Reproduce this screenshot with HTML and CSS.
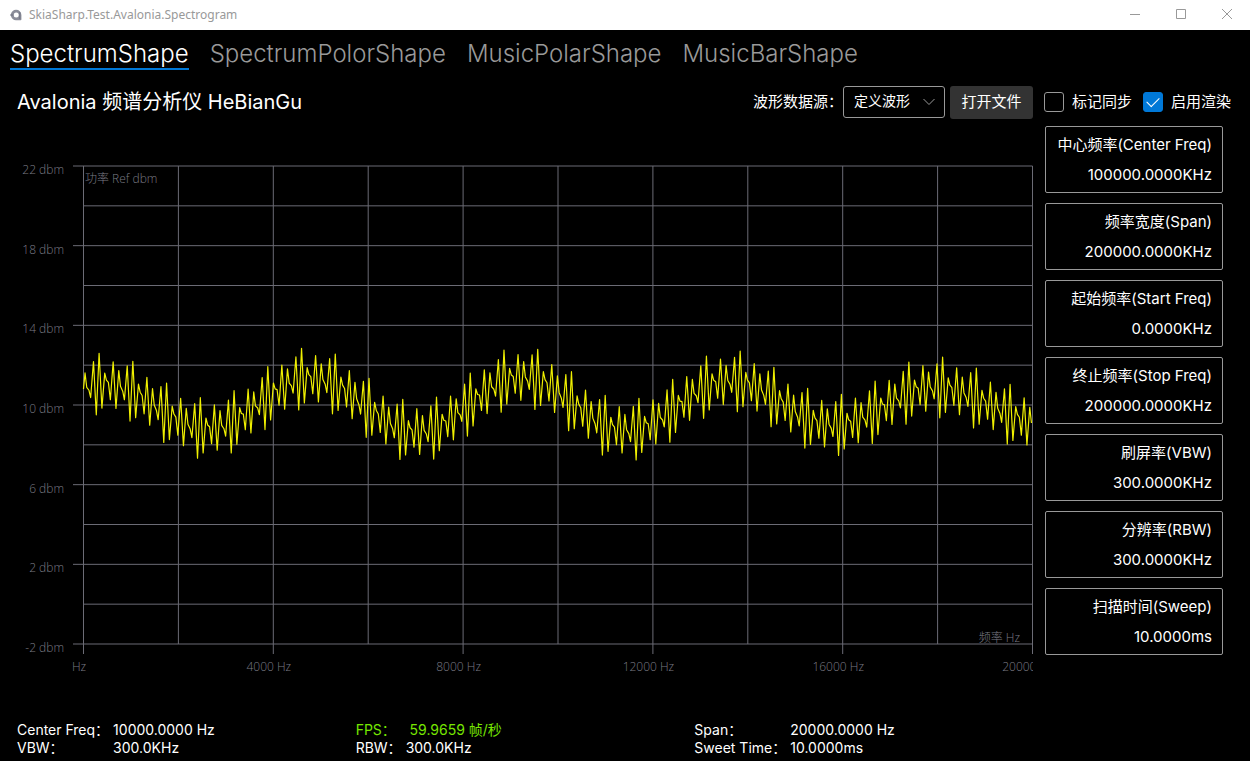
FILE: index.html
```
<!DOCTYPE html>
<html lang="zh-CN">
  <head>
    <meta charset="UTF-8" />
    <meta name="viewport" content="width=device-width, initial-scale=1.0" />
    <title>SkiaSharp.Test.Avalonia.Spectrogram</title>
    <link rel="stylesheet" href="styles.css">
  </head>
  <body>
    <header class="titlebar">
      <svg class="app-icon" viewBox="0 0 12 12" aria-hidden="true">
        <path d="M6 .8C3.400.8 1.600 2.500 1 4.800L0 6l1 1.200C1.600 9.500 3.400 11.200 6 11.200h4.600c.5 0 .8-.3.8-.8V6A5.300 5.200 0 0 0 6 .8z" fill="#8b8d99" />
        <circle cx="6.200" cy="6" r="2.500" fill="#fff" />
        <path d="M1 6h2.500M9.800 3v7" stroke="#6f7282" fill="none" />
      </svg>
      <span class="app-title">SkiaSharp.Test.Avalonia.Spectrogram</span>
      <div class="window-buttons">
        <button type="button" aria-label="Minimize">
          <svg viewBox="0 0 12 12"><path d="M1 5.5h10" /></svg>
        </button>
        <button type="button" aria-label="Maximize">
          <svg viewBox="0 0 12 12"><path d="M1.5 0.5h9v9h-9z" /></svg>
        </button>
        <button type="button" aria-label="Close">
          <svg viewBox="0 0 12 12"><path d="M1 0l10 10M11 0L1 10" /></svg>
        </button>
      </div>
    </header>

    <nav class="tabs">
      <a class="active" href="#spectrum">SpectrumShape</a>
      <a href="#spectrum-polar">SpectrumPolorShape</a>
      <a href="#music-polar">MusicPolarShape</a>
      <a href="#music-bar">MusicBarShape</a>
    </nav>

    <div class="toolbar">
      <h1>Avalonia 频谱分析仪 HeBianGu</h1>
      <label class="source-label" for="source">波形数据源：</label>
      <div class="select-box">
        <select id="source">
          <option>定义波形</option>
        </select>
        <svg class="chevron" viewBox="0 0 12 8" aria-hidden="true"><path d="M0.5 1l5.5 5.5L11.5 1" /></svg>
      </div>
      <button class="open-file" type="button">打开文件</button>
      <label class="check"><input type="checkbox" /><span>标记同步</span></label>
      <label class="check"><input type="checkbox" checked /><span>启用渲染</span></label>
    </div>

    <main class="content">
      <section class="chart">
        <div class="y-axis">
          <span>22 dbm</span>
          <span>18 dbm</span>
          <span>14 dbm</span>
          <span>10 dbm</span>
          <span>6 dbm</span>
          <span>2 dbm</span>
          <span>-2 dbm</span>
        </div>
        <div class="plot">
          <svg class="plot-svg" viewBox="0 0 960 488" preserveAspectRatio="none">
            <path id="grid" class="grid-lines" />
            <path id="wave" class="wave" />
          </svg>
          <span class="y-name">功率 Ref dbm</span>
          <span class="x-name">频率 Hz</span>
        </div>
        <div class="x-axis">
          <span>Hz</span>
          <span>4000 Hz</span>
          <span>8000 Hz</span>
          <span>12000 Hz</span>
          <span>16000 Hz</span>
          <span>20000 Hz</span>
        </div>
      </section>

      <aside class="cards">
        <div class="card"><span>中心频率(Center Freq)</span><span>100000.0000KHz</span></div>
        <div class="card"><span>频率宽度(Span)</span><span>200000.0000KHz</span></div>
        <div class="card"><span>起始频率(Start Freq)</span><span>0.0000KHz</span></div>
        <div class="card"><span>终止频率(Stop Freq)</span><span>200000.0000KHz</span></div>
        <div class="card"><span>刷屏率(VBW)</span><span>300.0000KHz</span></div>
        <div class="card"><span>分辨率(RBW)</span><span>300.0000KHz</span></div>
        <div class="card"><span>扫描时间(Sweep)</span><span>10.0000ms</span></div>
      </aside>
    </main>

    <footer class="status">
      <div class="status-group">
        <span>Center Freq：</span><span>10000.0000 Hz</span>
        <span>VBW：</span><span>300.0KHz</span>
      </div>
      <div class="status-group">
        <span class="fps">FPS：</span><span class="fps">&nbsp;59.9659 帧/秒</span>
        <span>RBW：</span><span>300.0KHz</span>
      </div>
      <div class="status-group">
        <span>Span：</span><span>20000.0000 Hz</span>
        <span>Sweet Time：</span><span>10.0000ms</span>
      </div>
    </footer>

    <script src="script.js"></script>
  </body>
</html>
```
FILE: styles.css
```
* {
  box-sizing: border-box;
}

body {
  margin: 0;
  min-height: 100vh;
  display: flex;
  flex-direction: column;
  background-color: #000;
  color: #fff;
  font-family: Inter, "Noto Sans CJK SC", sans-serif;
  font-size: 15px;
}

button,
select {
  font-family: inherit;
  color: inherit;
}

/* Title bar */

.titlebar {
  display: flex;
  align-items: center;
  height: 30px;
  padding-left: 10px;
  background-color: #fff;
  color: #999;
}

.app-icon {
  width: 12px;
  height: 12px;
  margin-right: 7px;
}

.app-title {
  padding-bottom: 2px;
  font-family: "Noto Sans", sans-serif;
  font-size: 12px;
}

.window-buttons {
  display: flex;
  margin-left: auto;
}

.window-buttons button {
  display: flex;
  justify-content: center;
  align-items: center;
  width: 46px;
  height: 30px;
  padding: 0;
  border: none;
  background: none;
}

.window-buttons svg {
  width: 12px;
  height: 12px;
  fill: none;
  stroke: #999;
}

/* Tabs */

.tabs {
  display: flex;
  gap: 21px;
  padding: 9px 10px 0;
}

.tabs a {
  height: 31px;
  border-bottom: 2px solid transparent;
  color: #999;
  font-size: 24px;
  font-weight: 300;
  line-height: 30px;
  text-decoration: none;
}

.tabs .active {
  border-color: #0078d7;
  color: #fff;
}

/* Toolbar */

.toolbar {
  display: flex;
  align-items: center;
  height: 32px;
  margin-top: 16px;
  padding: 0 19px 0 17px;
}

.toolbar h1 {
  margin: 0 auto 0 0;
  padding-bottom: 3px;
  font-size: 20px;
  font-weight: 400;
}

.source-label,
.check span {
  padding-bottom: 3px;
}

.select-box {
  position: relative;
  width: 102px;
  height: 32px;
}

.select-box select {
  width: 100%;
  height: 100%;
  padding: 0 0 3px 10px;
  border: 1px solid #999;
  border-radius: 3px;
  background-color: #000;
  font-size: 14px;
  appearance: none;
}

.chevron {
  position: absolute;
  right: 10px;
  top: 12px;
  width: 12px;
  height: 8px;
  fill: none;
  stroke: #999;
  pointer-events: none;
}

.open-file {
  width: 83px;
  height: 33px;
  margin-left: 5px;
  padding: 0 0 3px;
  border: none;
  border-radius: 3px;
  background-color: #333;
  font-size: 15px;
}

.check {
  display: flex;
  align-items: center;
  gap: 8px;
  margin-left: 11px;
}

.check input {
  width: 20px;
  height: 20px;
  margin: 0;
  border: 1px solid #999;
  border-radius: 3px;
  appearance: none;
}

.check input:checked {
  display: grid;
  place-items: center;
  border-color: #0078d7;
  background-color: #0078d7;
}

.check input:checked::after {
  content: "";
  width: 11px;
  height: 6px;
  margin-bottom: 3px;
  border-left: 1px solid #fff;
  border-bottom: 1px solid #fff;
  transform: rotate(-45deg);
}

/* Chart and parameter cards */

.content {
  flex: 1;
  display: grid;
  grid-template-columns: 1fr 217px;
}

.chart {
  display: grid;
  grid-template-columns: 73px 1fr;
  grid-template-rows: 1fr 16px;
  gap: 5px 0;
  padding: 48px 0 46px;
  overflow: hidden;
  color: #7a7a84;
  font-family: "Open Sans", "Noto Sans CJK SC", sans-serif;
  font-size: 12px;
  font-weight: 300;
  line-height: 16px;
}

.y-axis {
  display: flex;
  flex-direction: column;
  justify-content: space-between;
  align-items: flex-end;
  margin: -4px 0 -2px;
  padding-right: 9px;
}

.plot {
  display: flex;
  position: relative;
}

.plot-svg {
  flex: 1;
  width: 0;
  height: 100%;
  overflow: visible;
}

.grid-lines {
  fill: none;
  stroke: #6b6b75;
}

.wave {
  fill: none;
  stroke: #f0f000;
  stroke-width: 1.2px;
  stroke-linejoin: round;
}

.y-name,
.x-name {
  position: absolute;
}

.y-name {
  left: 12px;
  top: 5px;
}

.x-name {
  right: 13px;
  bottom: 8px;
}

.x-axis {
  grid-column: 2;
  display: flex;
  justify-content: space-between;
  padding: 0 5px 0 6px;
}

.x-axis span {
  display: flex;
  justify-content: center;
  width: 0;
  white-space: nowrap;
}

.cards {
  display: flex;
  flex-direction: column;
  gap: 10px;
  padding: 8px 27px 0 12px;
}

.card {
  display: flex;
  flex-direction: column;
  align-items: flex-end;
  padding: 3px 10px;
  border: 1px solid #999;
  border-radius: 2px;
  line-height: 30px;
  height: 67px;
}

/* Status */

.status {
  display: grid;
  grid-template-columns: repeat(3, 1fr);
  padding: 0 217px 4px 17px;
  font-size: 14px;
  line-height: 18px;
}

.status-group {
  display: grid;
  grid-template-columns: auto 1fr;
  column-gap: 4px;
  grid-auto-rows: 18px;
}

.fps {
  color: #76e600;
}
```
FILE: script.js
```
const LEFT = 10;
const WIDTH = 949.5;
const HEIGHT = 478;

function drawGrid() {
  let d = "";
  for (let i = 0; i <= 12; i++) {
    const y = (HEIGHT / 12) * i;
    d += `M${i % 2 ? LEFT : 0} ${y.toFixed(2)}H${LEFT + WIDTH}`;
  }
  for (let i = 0; i <= 10; i++) {
    const x = LEFT + 0.5 + (WIDTH / 10) * i - i * 0.05;
    d += `M${x.toFixed(2)} 0V${i % 2 ? HEIGHT : HEIGHT + 10}`;
  }
  document.getElementById("grid").setAttribute("d", d);
}

// slow envelope, one value for each period of the carrier
const envelope = [
  219, 203, 187.3, 195.3, 217, 231.7, 224.7, 200.7, 182.3, 188, 212.3, 233.3,
  231, 207, 184, 183.3, 205.7, 229.3, 232.3, 213.3, 190, 185, 201.3, 222.3,
  228.3, 215, 196, 191, 202, 218.3, 231, 236,
];

// one carrier period: [step out of 12, offset from the envelope]
const carrier = [
  [0, 0], [1, 55], [2, 20], [2.6, 27], [3.3, 29], [4, 46], [5, 7.6], [6, 53.5],
  [7, 14.8], [7.6, 30], [8.4, 34], [9, 42], [10, 7], [11, 61],
];

const PERIOD = 33.74;
const FIRST_PEAK = 26.1;

function envelopeAt(k, t) {
  const [a, b, c, d] = envelope.slice(k - 1, k + 3);
  return (
    b +
    0.5 * t * (c - a + t * (2 * a - 5 * b + 4 * c - d + t * (3 * (b - c) + d - a)))
  );
}

function drawWave() {
  const points = [`${LEFT + 0.5} 223`];
  for (let k = 1; k < envelope.length - 2; k++) {
    for (const [step, offset] of carrier) {
      const x = FIRST_PEAK + PERIOD * (k - 2 + step / 12);
      if (x <= LEFT + 0.5 || x > LEFT + WIDTH) continue;
      const y = envelopeAt(k, step / 12) + offset;
      points.push(`${x.toFixed(2)} ${y.toFixed(2)}`);
    }
  }
  document.getElementById("wave").setAttribute("d", "M" + points.join("L"));
}

drawGrid();
drawWave();
```
